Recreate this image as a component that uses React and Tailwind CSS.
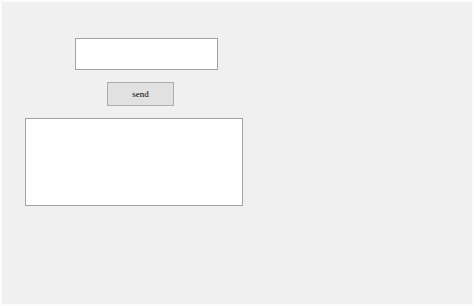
export default function App() {
    return (
        <div className="w-[474px] h-[306px] bg-[#fbfbfb] p-[2px]">
            <div className="w-full h-full bg-[#f0f0f0] flex flex-col items-start pt-[36px]">
                {/* message input */}
                <input
                    type="text"
                    className="ml-[73px] w-[143px] h-[32px] bg-white border border-[#a3a3a3] outline-none"
                />

                <button
                    type="button"
                    className="ml-[105px] mt-[12px] w-[67px] h-[24px] bg-[#e1e1e1] border border-[#adadad] text-[9px] text-black leading-none"
                    style={{ fontFamily: '"Liberation Serif", "DejaVu Serif", serif' }}
                >
                    send
                </button>

                {/* output area */}
                <textarea
                    readOnly
                    className="ml-[23px] mt-[12px] w-[218px] h-[88px] bg-white border border-[#a3a3a3] resize-none outline-none"
                />
            </div>
        </div>
    )
}
